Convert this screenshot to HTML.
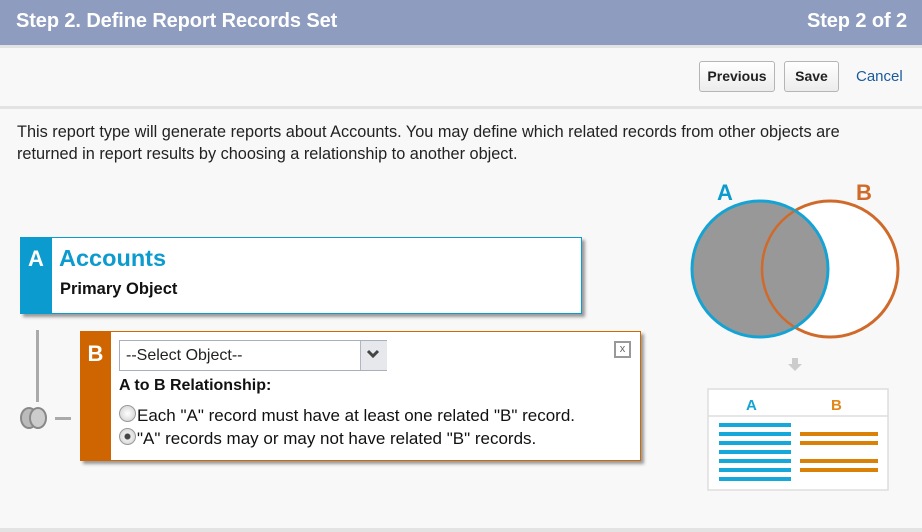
<!DOCTYPE html>
<html><head><style>
body{margin:0;width:922px;height:532px;background:#f8f8f8;font-family:"Liberation Sans",Arial,sans-serif;position:relative;overflow:hidden}
.hdr{position:absolute;left:0;top:0;width:922px;height:45px;background:#8e9dbf;color:#fff;font-weight:bold;font-size:20px}
.hdr span{position:absolute;top:10px;letter-spacing:-0.1px}
.sep{position:absolute;left:0;width:922px;background:#e3e3e3}
.btn{position:absolute;top:61px;height:31px;border:1px solid #b5b5b5;border-radius:3px;background:linear-gradient(#fff,#ececec);font-weight:bold;font-size:14px;color:#222;line-height:29px;text-align:center;box-sizing:border-box}
.abs{position:absolute}
</style></head><body>
<div class="hdr"><span style="left:16px">Step 2. Define Report Records Set</span><span style="right:15px">Step 2 of 2</span></div>
<div class="sep" style="top:45px;height:3px"></div>
<div class="btn" style="left:699px;width:76px">Previous</div>
<div class="btn" style="left:784px;width:55px">Save</div>
<div class="abs" style="left:856px;top:68px;font-size:15px;color:#1a5a9c">Cancel</div>
<div class="sep" style="top:106px;height:3px"></div>
<div class="abs" style="left:17px;top:121px;font-size:16.3px;color:#222;line-height:22px;width:880px">This report type will generate reports about Accounts. You may define which related records from other objects are returned in report results by choosing a relationship to another object.</div>

<div class="abs" style="left:20px;top:237px;width:562px;height:77px;background:#fff;border:1px solid #0c9bce;box-sizing:border-box;box-shadow:3px 3px 3px #999"></div>
<div class="abs" style="left:20px;top:237px;width:32px;height:77px;background:#0c9bce;color:#fff;font-weight:bold;font-size:22px;text-align:center;line-height:44px">A</div>
<div class="abs" style="left:59px;top:245px;font-size:23.5px;font-weight:bold;color:#0c9bce">Accounts</div>
<div class="abs" style="left:60px;top:280px;font-size:16.5px;font-weight:bold;color:#111">Primary Object</div>

<div class="abs" style="left:36px;top:330px;width:3px;height:72px;background:#aaa"></div>
<svg class="abs" style="left:18px;top:404px" width="56" height="28"><ellipse cx="11" cy="14" rx="8" ry="10" fill="#bbb" stroke="#888" stroke-width="2"/><ellipse cx="20" cy="14" rx="8" ry="10" fill="#ccc" stroke="#888" stroke-width="2"/><rect x="37" y="13" width="16" height="3" fill="#aaa"/></svg>

<div class="abs" style="left:80px;top:331px;width:561px;height:130px;background:#fff;border:1px solid #d06a00;box-sizing:border-box;box-shadow:3px 3px 3px #999"></div>
<div class="abs" style="left:80px;top:331px;width:31px;height:130px;background:#cf6500;color:#fff;font-weight:bold;font-size:22px;text-align:center;line-height:46px">B</div>
<div class="abs" style="left:119px;top:340px;width:268px;height:31px;border:1px solid #a8b0c0;box-sizing:border-box;background:#fff;font-size:16px;color:#222;line-height:29px;padding-left:6px">--Select Object--</div>
<div class="abs" style="left:360px;top:341px;width:26px;height:29px;background:#e6e8ec;border-left:1px solid #b0b6c2"></div>
<svg class="abs" style="left:365px;top:348px" width="16" height="12"><path d="M3 3 L8 8 L13 3" stroke="#444" stroke-width="3" fill="none"/></svg>
<div class="abs" style="left:614px;top:341px;width:17px;height:17px;border:2px solid #999;box-sizing:border-box;font-size:11px;color:#666;text-align:center;line-height:13px">x</div>
<div class="abs" style="left:119px;top:377px;font-size:16px;font-weight:bold;color:#111">A to B Relationship:</div>
<div class="abs" style="left:119px;top:405px;width:17px;height:17px;border-radius:50%;background:radial-gradient(#fff,#ccc);border:1px solid #999;box-sizing:border-box"></div>
<div class="abs" style="left:137px;top:406px;font-size:17px;color:#111">Each "A" record must have at least one related "B" record.</div>
<div class="abs" style="left:119px;top:428px;width:17px;height:17px;border-radius:50%;background:radial-gradient(#444 2.5px,#eee 3.5px,#ccc);border:1px solid #999;box-sizing:border-box"></div>
<div class="abs" style="left:137px;top:429px;font-size:17px;color:#111">"A" records may or may not have related "B" records.</div>

<svg class="abs" style="left:680px;top:170px" width="230" height="330">
<defs><clipPath id="ca"><circle cx="80" cy="99" r="67"/></clipPath></defs>
<text x="37" y="30" font-family="Liberation Sans" font-weight="bold" font-size="22" fill="#0c9bce">A</text>
<text x="176" y="30" font-family="Liberation Sans" font-weight="bold" font-size="22" fill="#d06a2a">B</text>
<circle cx="150" cy="99" r="68" fill="#fff" stroke="#d06a2a" stroke-width="3"/>
<circle cx="80" cy="99" r="68" fill="#989898" stroke="#15a3d4" stroke-width="3"/>
<circle cx="150" cy="99" r="68" fill="none" stroke="#d06a2a" stroke-width="2.5" clip-path="url(#ca)"/>
<path d="M112 188 h6 v6 h4 l-7 7 l-7 -7 h4z" fill="#ccc"/>
<rect x="28" y="219" width="180" height="101" fill="#fff" stroke="#ddd" stroke-width="1.5"/>
<line x1="28" y1="246" x2="208" y2="246" stroke="#ddd" stroke-width="1.5"/>
<text x="66" y="240" font-family="Liberation Sans" font-weight="bold" font-size="15" fill="#15a3d4">A</text>
<text x="151" y="240" font-family="Liberation Sans" font-weight="bold" font-size="15" fill="#e0891a">B</text>
<g fill="#15a8d8"><rect x="39" y="253" width="72" height="4"/><rect x="39" y="262" width="72" height="4"/><rect x="39" y="271" width="72" height="4"/><rect x="39" y="280" width="72" height="4"/><rect x="39" y="289" width="72" height="4"/><rect x="39" y="298" width="72" height="4"/><rect x="39" y="307" width="72" height="4"/></g>
<g fill="#da8207"><rect x="120" y="262" width="78" height="4"/><rect x="120" y="271" width="78" height="4"/><rect x="120" y="289" width="78" height="4"/><rect x="120" y="298" width="78" height="4"/></g>
</svg>
<div class="sep" style="top:528px;height:4px"></div>
</body></html>
